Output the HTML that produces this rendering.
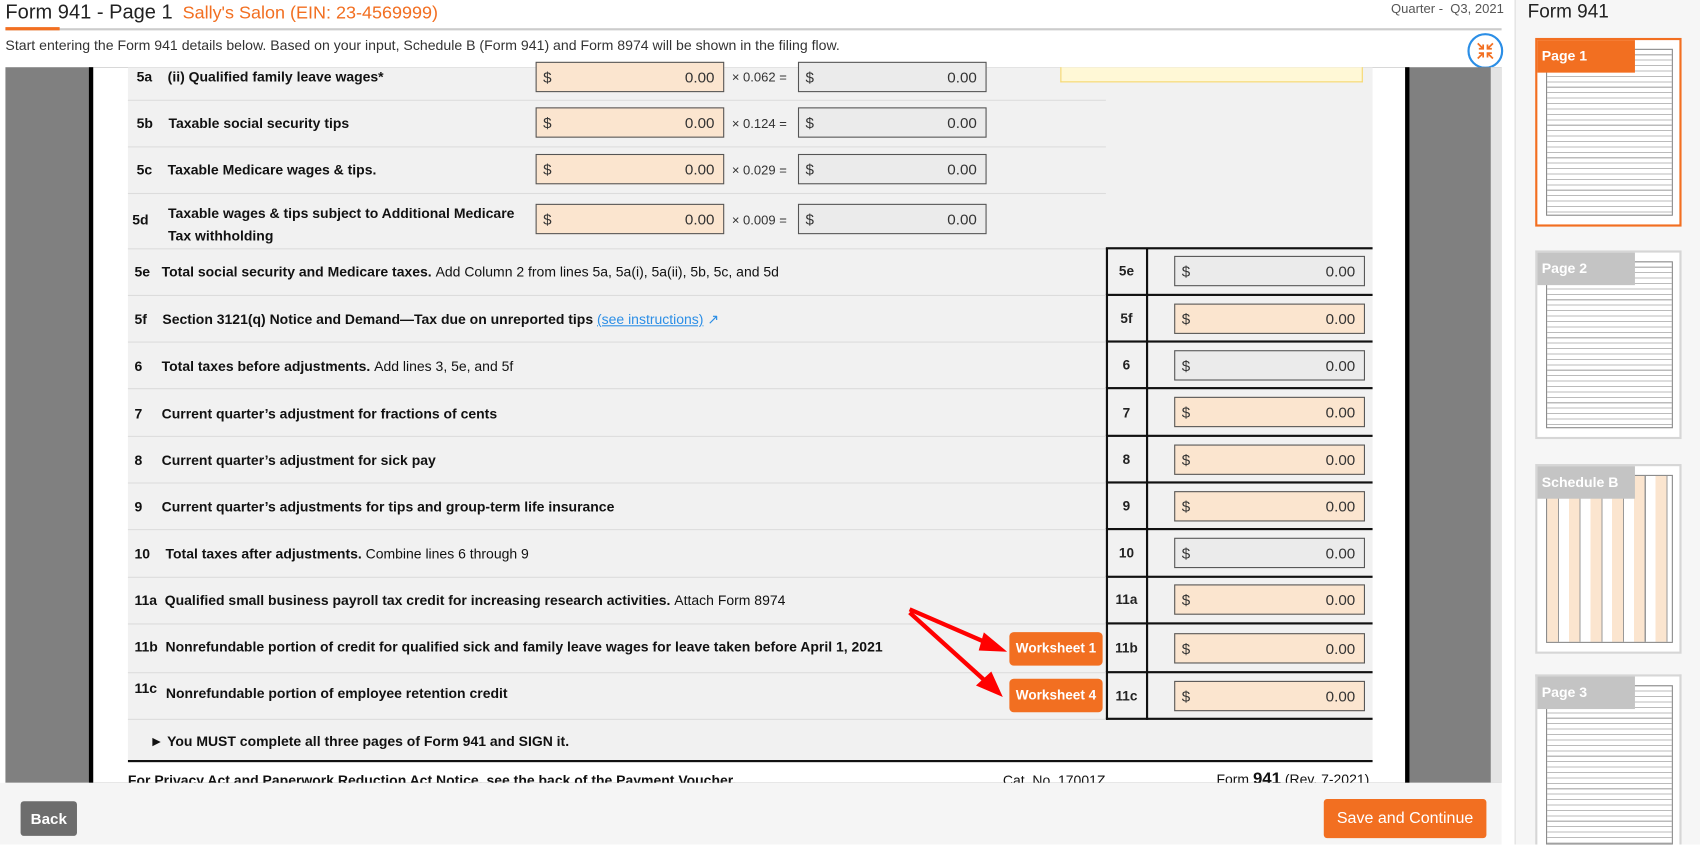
<!DOCTYPE html>
<html><head><meta charset="utf-8"><style>
*{box-sizing:border-box;margin:0;padding:0}
html,body{overflow:hidden}
body{width:1700px;height:845px;position:relative;overflow:hidden;background:#fff;font-family:"Liberation Sans",Arial,sans-serif;color:#222}
#w{position:absolute;left:0;top:0;width:1568px;height:779px;transform:scale(1.08418);transform-origin:0 0;overflow:hidden}
.a{position:absolute}
.cond{font-family:"Liberation Sans Narrow","Liberation Sans",sans-serif}
.lbl{position:absolute;font-size:12.9px;font-weight:bold;color:#111;white-space:nowrap}
.lbl span{font-weight:normal}
.inp{position:absolute;height:28px;border:1px solid #555;background:#fbe5cf;font-size:14px;color:#333}
.inp.g{background:#ebebeb}
.inp b{position:absolute;left:6px;top:5px;font-weight:normal}
.inp i{position:absolute;right:8px;top:5px;font-style:normal}
.num{position:absolute;left:1020px;width:38px;text-align:center;font-size:12.5px;font-weight:bold}
.hl{position:absolute;left:118px;width:902px;height:1px;background:#dcdcdc}
.bl{position:absolute;left:1020px;width:246px;height:2px;background:#111}
.mul{position:absolute;left:675px;font-size:12px;color:#333}
.ws{position:absolute;left:931px;width:86px;height:31px;background:#f26f21;border-radius:4px;color:#fff;font-weight:bold;font-size:12.5px;text-align:center;line-height:31px}
.th{position:absolute;left:1416px;width:135px;border:2px solid #d6d6d6;background:#fff}
.th .t{position:absolute;left:0;top:0;width:90px;height:30px;background:#c4c4c4;color:#fff;font-size:13px;font-weight:bold;padding:7px 4px}
.th .p{position:absolute;left:8px;right:6px;top:8px;bottom:8px;border:1px solid #888;background:repeating-linear-gradient(#fff 0 4px,#bbb 4px 5px)}
</style></head><body><div id="w">
<div class="a cond" style="left:5px;top:0;font-size:18.5px;color:#222">Form 941 - Page 1 <span style="color:#f26f21;font-size:16.6px;margin-left:4px">Sally's Salon (EIN: 23-4569999)</span></div>
<div class="a cond" style="left:1283px;top:1px;font-size:12px;color:#555">Quarter -&nbsp; Q3, 2021</div>
<div class="a" style="left:5px;top:26px;width:1380px;height:2px;background:#ccc"></div>
<div class="a" style="left:5px;top:25px;width:50px;height:3px;background:#f26f21"></div>
<div class="a cond" style="left:5px;top:34px;font-size:13px;color:#333">Start entering the Form 941 details below. Based on your input, Schedule B (Form 941) and Form 8974 will be shown in the filing flow.</div>
<svg class="a" style="left:1353px;top:30px" width="34" height="34" viewBox="0 0 34 34"><circle cx="17" cy="17" r="15.5" fill="#fff" stroke="#2b8ee6" stroke-width="2"/>
<g stroke="#f26f21" stroke-width="1.6" fill="none"><path d="M10 10L15 15M15 11V15H11"/><path d="M24 10L19 15M19 11V15H23"/><path d="M10 24L15 19M15 23V19H11"/><path d="M24 24L19 19M19 23V19H23"/></g></svg>
<div class="a" style="left:5px;top:62px;width:1380px;height:660px;background:#808080"></div>
<div class="a" style="left:82px;top:62px;width:1218px;height:660px;background:#000"></div>
<div class="a" style="left:86px;top:62px;width:1210px;height:660px;background:#fff"></div>
<div class="a" style="left:1375px;top:62px;width:10px;height:660px;background:#e4e4e4"></div>
<div class="a" style="left:118px;top:62px;width:1148px;height:640px;background:#f1f1f1"></div>
<div class="a" style="left:978px;top:62px;width:279px;height:14px;background:#fff8d6;border:1px solid #f5d76e;border-top:none"></div>
<div class="a" style="left:118px;top:701px;width:1148px;height:2px;background:#111"></div>
<div class="a" style="left:118px;top:712px;font-size:12.9px;font-weight:bold;color:#111">For Privacy Act and Paperwork Reduction Act Notice, see the back of the Payment Voucher.</div>
<div class="a" style="left:925px;top:712px;font-size:12.9px;color:#111">Cat. No. 17001Z</div>
<div class="a" style="left:1122px;top:710px;font-size:12.9px;color:#111">Form <b style="font-size:15.5px">941</b> (Rev. 7-2021)</div>

<div class="lbl" style="left:126px;top:63px">5a &nbsp;&nbsp; (ii) Qualified family leave wages*</div>
<div class="lbl" style="left:126px;top:106px">5b &nbsp;&nbsp; Taxable social security tips</div>
<div class="lbl" style="left:126px;top:149px">5c &nbsp;&nbsp; Taxable Medicare wages &amp; tips.</div>
<div class="lbl" style="left:122px;top:195px">5d</div>
<div class="lbl" style="left:155px;top:186px;line-height:21px">Taxable wages &amp; tips subject to Additional Medicare<br>Tax withholding</div>
<div class="hl" style="top:92px"></div><div class="hl" style="top:135px"></div><div class="hl" style="top:178px"></div><div class="hl" style="top:229px"></div>
<div class="inp" style="left:494px;top:57px;width:174px"><b>$</b><i>0.00</i></div>
<div class="inp g" style="left:736px;top:57px;width:174px"><b>$</b><i>0.00</i></div>
<div class="mul" style="top:64px">× 0.062 =</div>
<div class="inp" style="left:494px;top:99px;width:174px"><b>$</b><i>0.00</i></div>
<div class="inp g" style="left:736px;top:99px;width:174px"><b>$</b><i>0.00</i></div>
<div class="mul" style="top:107px">× 0.124 =</div>
<div class="inp" style="left:494px;top:142px;width:174px"><b>$</b><i>0.00</i></div>
<div class="inp g" style="left:736px;top:142px;width:174px"><b>$</b><i>0.00</i></div>
<div class="mul" style="top:150px">× 0.029 =</div>
<div class="inp" style="left:494px;top:188px;width:174px"><b>$</b><i>0.00</i></div>
<div class="inp g" style="left:736px;top:188px;width:174px"><b>$</b><i>0.00</i></div>
<div class="mul" style="top:196px">× 0.009 =</div>

<div class="a" style="left:1020px;top:229px;width:2px;height:435px;background:#111"></div>
<div class="a" style="left:1057px;top:229px;width:2px;height:435px;background:#111"></div>
<div class="bl" style="top:228px"></div><div class="bl" style="top:271px"></div><div class="bl" style="top:314px"></div><div class="bl" style="top:357px"></div><div class="bl" style="top:401px"></div><div class="bl" style="top:444px"></div><div class="bl" style="top:487px"></div><div class="bl" style="top:531px"></div><div class="bl" style="top:574px"></div><div class="bl" style="top:619px"></div><div class="bl" style="top:662px"></div>
<div class="hl" style="top:272px"></div><div class="hl" style="top:315px"></div><div class="hl" style="top:358px"></div><div class="hl" style="top:402px"></div><div class="hl" style="top:445px"></div><div class="hl" style="top:488px"></div><div class="hl" style="top:532px"></div><div class="hl" style="top:575px"></div><div class="hl" style="top:620px"></div><div class="hl" style="top:663px"></div>

<div class="lbl" style="left:124px;top:243px">5e &nbsp; Total social security and Medicare taxes. <span>Add Column 2 from lines 5a, 5a(i), 5a(ii), 5b, 5c, and 5d</span></div>
<div class="lbl" style="left:124px;top:287px">5f &nbsp;&nbsp; Section 3121(q) Notice and Demand—Tax due on unreported tips <span style="color:#2b8ee6;text-decoration:underline">(see instructions)</span> <span style="color:#2b8ee6">↗</span></div>
<div class="lbl" style="left:124px;top:330px">6 &nbsp;&nbsp;&nbsp; Total taxes before adjustments. <span>Add lines 3, 5e, and 5f</span></div>
<div class="lbl" style="left:124px;top:374px">7 &nbsp;&nbsp;&nbsp; Current quarter’s adjustment for fractions of cents</div>
<div class="lbl" style="left:124px;top:417px">8 &nbsp;&nbsp;&nbsp; Current quarter’s adjustment for sick pay</div>
<div class="lbl" style="left:124px;top:460px">9 &nbsp;&nbsp;&nbsp; Current quarter’s adjustments for tips and group-term life insurance</div>
<div class="lbl" style="left:124px;top:503px">10 &nbsp;&nbsp; Total taxes after adjustments. <span>Combine lines 6 through 9</span></div>
<div class="lbl" style="left:124px;top:546px">11a &nbsp;Qualified small business payroll tax credit for increasing research activities. <span>Attach Form 8974</span></div>
<div class="lbl" style="left:124px;top:589px">11b &nbsp;Nonrefundable portion of credit for qualified sick and family leave wages for leave taken before April 1, 2021</div>
<div class="lbl" style="left:124px;top:627px">11c</div>
<div class="lbl" style="left:153px;top:632px">Nonrefundable portion of employee retention credit</div>
<div class="lbl" style="left:138px;top:676px">► You MUST complete all three pages of Form 941 and SIGN it.</div>

<div class="num" style="top:243px">5e</div><div class="num" style="top:287px">5f</div><div class="num" style="top:330px">6</div><div class="num" style="top:374px">7</div><div class="num" style="top:417px">8</div><div class="num" style="top:460px">9</div><div class="num" style="top:503px">10</div><div class="num" style="top:546px">11a</div><div class="num" style="top:591px">11b</div><div class="num" style="top:635px">11c</div>

<div class="inp g" style="left:1083px;top:236px;width:176px"><b>$</b><i>0.00</i></div>
<div class="inp" style="left:1083px;top:280px;width:176px"><b>$</b><i>0.00</i></div>
<div class="inp g" style="left:1083px;top:323px;width:176px"><b>$</b><i>0.00</i></div>
<div class="inp" style="left:1083px;top:366px;width:176px"><b>$</b><i>0.00</i></div>
<div class="inp" style="left:1083px;top:410px;width:176px"><b>$</b><i>0.00</i></div>
<div class="inp" style="left:1083px;top:453px;width:176px"><b>$</b><i>0.00</i></div>
<div class="inp g" style="left:1083px;top:496px;width:176px"><b>$</b><i>0.00</i></div>
<div class="inp" style="left:1083px;top:539px;width:176px"><b>$</b><i>0.00</i></div>
<div class="inp" style="left:1083px;top:584px;width:176px"><b>$</b><i>0.00</i></div>
<div class="inp" style="left:1083px;top:628px;width:176px"><b>$</b><i>0.00</i></div>

<div class="ws" style="top:583px">Worksheet 1</div>
<div class="ws" style="top:626px">Worksheet 4</div>
<svg class="a" style="left:830px;top:555px" width="110" height="100" viewBox="0 0 110 100">
<path d="M9 7 L85 40" stroke="#f00" stroke-width="4" fill="none"/><path d="M96 45 L78 30 L74 44Z" fill="#f00" stroke="#f00" stroke-width="2"/>
<path d="M9 10 L82 76" stroke="#f00" stroke-width="4" fill="none"/><path d="M93 86 L84 66 L72 77Z" fill="#f00" stroke="#f00" stroke-width="2"/>
</svg>

<div class="a" style="left:0;top:722px;width:1385px;height:57px;background:#f5f5f5"></div>
<div class="a cond" style="left:19px;top:739px;width:52px;height:32px;background:#6d6d6d;border-radius:3px;color:#fff;font-weight:bold;font-size:14px;text-align:center;line-height:32px">Back</div>
<div class="a cond" style="left:1221px;top:737px;width:150px;height:36px;background:#f26f21;border-radius:3px;color:#fff;font-size:14.8px;text-align:center;line-height:36px">Save and Continue</div>

<div class="a" style="left:1397px;top:0;width:171px;height:779px;background:#f6f6f6;border-left:1px solid #ddd"></div>
<div class="a cond" style="left:1409px;top:0;font-size:17.5px;color:#222">Form 941</div>
<div class="th" style="top:35px;height:174px;border-color:#f26f21"><div class="p"></div><div class="t" style="background:#f26f21">Page 1</div></div>
<div class="th" style="top:231px;height:174px"><div class="p"></div><div class="t">Page 2</div></div>
<div class="th" style="top:428px;height:175px"><div class="p" style="background:repeating-linear-gradient(90deg,#fbe5cf 0 10px,#999 10px 11px,#fff 11px 20px)"></div><div class="t">Schedule B</div></div>
<div class="th" style="top:622px;height:157px;border-bottom:none"><div class="p" style="bottom:0"></div><div class="t">Page 3</div></div>
</div></body></html>
